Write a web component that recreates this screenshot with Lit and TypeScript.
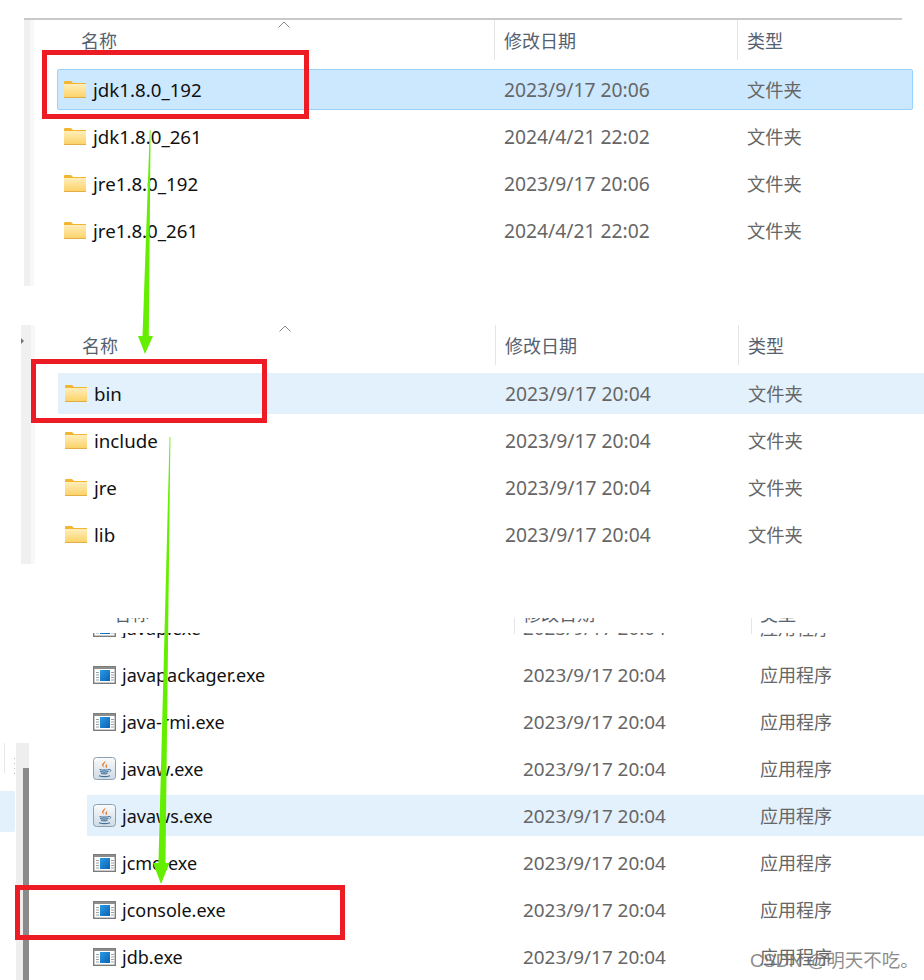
import { LitElement, html, css, svg } from 'lit';
import { customElement } from 'lit/decorators.js';

type Kind = 'folder' | 'exe' | 'java';

interface Row {
  name: string;
  date: string;
  type: string;
  kind: Kind;
  state?: 'selected' | 'hover';
}

const FOLDER = '文件夹';
const APP = '应用程序';
const APP_DATE = '2023/9/17 20:04';

const jdkRows: Row[] = [
  { name: 'jdk1.8.0_192', date: '2023/9/17 20:06', type: FOLDER, kind: 'folder', state: 'selected' },
  { name: 'jdk1.8.0_261', date: '2024/4/21 22:02', type: FOLDER, kind: 'folder' },
  { name: 'jre1.8.0_192', date: '2023/9/17 20:06', type: FOLDER, kind: 'folder' },
  { name: 'jre1.8.0_261', date: '2024/4/21 22:02', type: FOLDER, kind: 'folder' },
];

const binRows: Row[] = [
  { name: 'bin', date: APP_DATE, type: FOLDER, kind: 'folder', state: 'hover' },
  { name: 'include', date: APP_DATE, type: FOLDER, kind: 'folder' },
  { name: 'jre', date: APP_DATE, type: FOLDER, kind: 'folder' },
  { name: 'lib', date: APP_DATE, type: FOLDER, kind: 'folder' },
];

const exeRows: Row[] = [
  { name: 'javapackager.exe', date: APP_DATE, type: APP, kind: 'exe' },
  { name: 'java-rmi.exe', date: APP_DATE, type: APP, kind: 'exe' },
  { name: 'javaw.exe', date: APP_DATE, type: APP, kind: 'java' },
  { name: 'javaws.exe', date: APP_DATE, type: APP, kind: 'java', state: 'hover' },
  { name: 'jcmd.exe', date: APP_DATE, type: APP, kind: 'exe' },
  { name: 'jconsole.exe', date: APP_DATE, type: APP, kind: 'exe' },
  { name: 'jdb.exe', date: APP_DATE, type: APP, kind: 'exe' },
];

const folderIcon = html`<svg class="icon" width="22" height="17" viewBox="0 0 22 17">
  <defs>
    <linearGradient id="fold" x1="0" y1="0" x2="0" y2="1">
      <stop offset="0" stop-color="#ffeebb" />
      <stop offset="1" stop-color="#fcd36a" />
    </linearGradient>
  </defs>
  <path d="M0 1q0-1 1-1h6l2 2h13v2H0z" fill="#f2b632" />
  <rect y="3" width="22" height="13" fill="url(#fold)" />
  <rect y="16" width="22" height="1" fill="#e3ae45" />
</svg>`;

const dots = (x: number) =>
  [6, 8.5, 11, 13.5].map((y) => svg`<rect x=${x} y=${y} width="3" height="1" fill="#9aa0a6" />`);

const exeIcon = html`<svg class="icon" width="23" height="18" viewBox="0 0 23 18">
  <defs>
    <linearGradient id="exe" x1="0" y1="0" x2="1" y2="1">
      <stop offset="0" stop-color="#2b9be6" />
      <stop offset="1" stop-color="#0a62b4" />
    </linearGradient>
  </defs>
  <rect x=".7" y=".7" width="21.600" height="16.600" fill="#fff" stroke="#7c7c7c" stroke-width="1.400" />
  <rect x="1" y="1" width="21" height="2" fill="#8d8d8d" />
  <rect x="7" y="4" width="10" height="11" fill="url(#exe)" />
  ${dots(3)}${dots(18)}
</svg>`;

const javaIcon = html`<svg class="icon" width="23" height="23" viewBox="0 0 23 23">
  <defs>
    <linearGradient id="jv" x1="0" y1="0" x2="0" y2="1">
      <stop offset="0" stop-color="#fafbfc" />
      <stop offset="1" stop-color="#cfdae4" />
    </linearGradient>
  </defs>
  <rect x=".5" y=".5" width="22" height="22" rx="3" fill="url(#jv)" stroke="#8ba0b3" />
  <path d="M12 3.500c1.500 2-2.500 3.500-1.500 6 .3.800 1 1.500 1 1.500-2-1-3-2.500-2-4.200.8-1.300 2.500-2 2.500-3.300z" fill="#e2711d" />
  <path d="M14.500 6.500c-2 1-2.500 2-1.700 3.300.3.600.2 1-.3 1.400 1.700-.7 2-1.700 1.200-2.800-.4-.6.1-1.300.8-1.900z" fill="#e2711d" />
  <path d="M6.500 12.500c2 .8 8 .8 9.500 0M7 14.500c2 .7 7 .7 8.500 0M8 16.500c2 .5 5 .5 6.500 0M6 18.800c3 1 8 1 11 0" fill="none" stroke="#3f7199" stroke-width="1.200" />
  <path d="M16 12.500c2-.5 2.500 1.500.5 2.500" fill="none" stroke="#3f7199" stroke-width=".9" />
</svg>`;

const ICONS: Record<Kind, unknown> = { folder: folderIcon, exe: exeIcon, java: javaIcon };

const chevron = (cls: string) => html`<svg class="chevron ${cls}" width="12" height="7" viewBox="0 0 12 7">
  <path d="M.5 6.500 6 1l5.500 5.500" fill="none" stroke="#7d8a96" stroke-width="1" />
</svg>`;

@customElement('app-root')
export class AppRoot extends LitElement {
  static styles = css`
    :host {
      display: block;
      position: relative;
      width: 924px;
      height: 980px;
      overflow: hidden;
      background: #fff;
      font-family: 'Noto Sans', 'Noto Sans CJK SC', sans-serif;
      font-size: 18px;
    }

    .topline {
      width: 878px;
      height: 2px;
      margin: 18px 0 0 24px;
      background: #c9c9c9;
    }

    .panel {
      display: flex;
    }

    .panel-jdk {
      height: 266px;
      margin-left: 24px;
    }

    .panel-bin {
      height: 239px;
      margin: 39px 0 0 21px;
    }

    .panel-exe {
      height: 362px;
      margin-top: 54px;
    }

    .strip {
      position: relative;
      flex: none;
      width: 6px;
      background: #f0f0f0;
      border-right: 4px solid #f8f8f8;
    }

    .panel-bin .strip {
      width: 10px;
    }

    .strip-arrow {
      position: absolute;
      left: 0;
      top: 13px;
      border-left: 3px solid #777;
      border-top: 3px solid transparent;
      border-bottom: 3px solid transparent;
    }

    .list {
      display: flex;
      flex-direction: column;
      gap: 6px;
      width: 880px;
      padding-left: 23px;
      flex: none;
    }

    .head,
    .row {
      display: grid;
      grid-template-columns: 437px 243px 1fr;
      align-items: center;
    }

    .head {
      position: relative;
      height: 40px;
      margin-bottom: 3px;
      color: #54616f;
    }

    .head > div {
      display: flex;
      align-items: center;
      height: 100%;
      padding-left: 9px;
      padding-bottom: 1px;
      box-sizing: border-box;
    }

    .head > .col-name {
      padding-left: 24px;
    }

    .head > .col-sep {
      border-left: 1px solid #e5e5e5;
    }

    .panel-bin .head {
      margin-bottom: 2px;
    }

    .chevron {
      position: absolute;
      left: 221px;
      top: 1px;
    }

    .chevron.flush {
      top: 0;
    }

    .row {
      box-sizing: border-box;
      height: 41px;
      width: 866px;
    }

    .row.selected {
      width: 856px;
      background: #cce8ff;
      border: 1px solid #99d1ff;
      border-radius: 2px;
      grid-template-columns: 436px 243px 1fr;
    }

    .row.selected .name {
      padding-left: 6px;
    }

    .row.hover {
      background: #e3f1fd;
    }

    .name {
      display: flex;
      align-items: center;
      gap: 7px;
      padding-left: 7px;
      color: #111;
    }

    .label {
      font-size: 18.7px;
    }

    .icon {
      flex: none;
    }

    .date {
      padding-left: 10px;
      font-size: 19.3px;
      color: #666;
    }

    .type {
      padding-left: 10px;
      padding-bottom: 2px;
      font-size: 18.3px;
      color: #666;
    }

    /* third capture: left gutter is what is left of the window behind it */
    .gutter {
      display: flex;
      width: 29px;
      flex: none;
    }

    .gutter-left {
      position: relative;
      width: 16px;
      padding-top: 173px;
    }

    .gutter-hover {
      width: 15px;
      height: 41px;
      background: #e3f1fd;
      border-radius: 0 2px 2px 0;
    }

    .gutter-line {
      position: absolute;
      left: 4px;
      top: 125px;
      width: 1px;
      height: 30px;
      background: #e6e6e6;
    }

    .gutter-dots {
      position: absolute;
      left: 14px;
      top: 140px;
      width: 1px;
      height: 16px;
      background: repeating-linear-gradient(#bbb 0 1px, transparent 1px 5px);
    }

    .track {
      display: flex;
      width: 13px;
      margin-top: 125px;
      padding-left: 7px;
      box-sizing: border-box;
      background: #eee;
    }

    .thumb {
      flex: 1;
      margin-top: 25px;
      background: #8a8a8a;
    }

    .panel-exe .list {
      width: 895px;
      padding-left: 58px;
      box-sizing: border-box;
    }

    .panel-exe .row {
      width: 837px;
      grid-template-columns: 436px 237px 1fr;
    }

    .panel-exe .name {
      gap: 6px;
      padding-left: 6px;
    }

    .panel-exe .label {
      font-size: 18px;
    }

    .panel-exe .date {
      padding-left: 0;
      font-size: 18.9px;
    }

    .panel-exe .type {
      padding-left: 0;
      font-size: 18px;
    }

    .cut {
      margin-bottom: 10px;
    }

    .cut-head {
      display: grid;
      grid-template-columns: 427px 237px 1fr;
      height: 16px;
      margin-bottom: -1px;
      color: #54616f;
    }

    .cut-head > div {
      height: 16px;
      overflow: hidden;
      padding-left: 8px;
    }

    .cut-head > .col-name {
      padding-left: 26px;
    }

    .cut-head > .col-sep {
      border-left: 1px solid #e5e5e5;
    }

    .cut-clip {
      height: 5px;
      overflow: hidden;
    }

    .cut-clip span {
      display: block;
      margin-top: -18px;
      line-height: 28px;
    }

    .cut-row {
      height: 5px;
      overflow: hidden;
    }

    .panel-exe .cut-row .row {
      margin-top: -26px;
    }

    .annotations {
      position: absolute;
      left: 0;
      top: 0;
      pointer-events: none;
    }

    .watermark {
      position: absolute;
      left: 750px;
      top: 947px;
      font-family: 'Liberation Sans', 'Noto Sans CJK SC', sans-serif;
      font-size: 18.5px;
      line-height: 28px;
      white-space: nowrap;
      color: rgba(110, 110, 110, 0.8);
    }
  `;

  private renderRow(row: Row) {
    return html`<div class="row ${row.state ?? ''}">
      <div class="name">${ICONS[row.kind]}<span class="label">${row.name}</span></div>
      <div class="date">${row.date}</div>
      <div class="type">${row.type}</div>
    </div>`;
  }

  private renderHead(flush = false) {
    return html`<div class="head">
      <div class="col-name">名称</div>
      <div class="col-sep">修改日期</div>
      <div class="col-sep">类型</div>
      ${chevron(flush ? 'flush' : '')}
    </div>`;
  }

  render() {
    return html`
      <div class="topline"></div>
      <section class="panel panel-jdk">
        <div class="strip"></div>
        <div class="list">${this.renderHead()}${jdkRows.map((r) => this.renderRow(r))}</div>
      </section>

      <section class="panel panel-bin">
        <div class="strip"><div class="strip-arrow"></div></div>
        <div class="list">${this.renderHead(true)}${binRows.map((r) => this.renderRow(r))}</div>
      </section>

      <section class="panel panel-exe">
        <div class="gutter">
          <div class="gutter-left">
            <div class="gutter-line"></div>
            <div class="gutter-dots"></div>
            <div class="gutter-hover"></div>
          </div>
          <div class="track"><div class="thumb"></div></div>
        </div>
        <div class="list">
          <div class="cut">
            <div class="cut-head">
              <div class="col-name"><div class="cut-clip"><span>名称</span></div></div>
              <div class="col-sep"><div class="cut-clip"><span>修改日期</span></div></div>
              <div class="col-sep"><div class="cut-clip"><span>类型</span></div></div>
            </div>
            <div class="cut-row">
              ${this.renderRow({ name: 'javap.exe', date: APP_DATE, type: APP, kind: 'exe' })}
            </div>
          </div>
          ${exeRows.map((r) => this.renderRow(r))}
        </div>
      </section>

      <svg class="annotations" width="924" height="980" viewBox="0 0 924 980">
        <polygon points="149.800,130 150.600,130 148.800,336 153,336 145,354 138,336 142.500,336" fill="#64ee00" />
        <polygon points="169.600,437 170.400,437 165.500,863 169.500,863 161,884 153,863 158.500,863" fill="#64ee00" />
        <g fill="none" stroke="#ed1c24" stroke-width="5">
          <rect x="44.500" y="52.500" width="262" height="64" />
          <rect x="33.500" y="361.500" width="231" height="59" />
          <rect x="17.500" y="887.500" width="325" height="50" />
        </g>
      </svg>
      <div class="watermark">CSDN @明天不吃。</div>
    `;
  }
}
